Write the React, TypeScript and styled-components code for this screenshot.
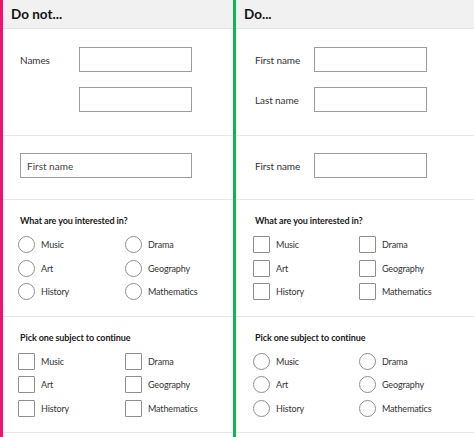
import React from "react";
import styled, { createGlobalStyle } from "styled-components";

const GlobalStyle = createGlobalStyle`
  html, body {
    margin: 0;
    padding: 0;
    background: #ffffff;
  }
  body {
    font-family: Lato, "Open Sans", "Liberation Sans", sans-serif;
    color: #333333;
  }
`;

const Page = styled.div`
  display: grid;
  grid-template-columns: 233px 1fr;
  width: 474px;
  height: 437px;
  overflow: hidden;
`;

const Column = styled.div<{ $accent: string; $inset: number }>`
  border-left: 3px solid ${(p) => p.$accent};
  display: flex;
  flex-direction: column;
  --inset: ${(p) => p.$inset}px;
`;

const Header = styled.div`
  height: 29px;
  box-sizing: border-box;
  background: #f1f1f1;
  border-bottom: 1px solid #e2e2e2;
  display: flex;
  align-items: center;
  padding-left: 8px;
  font-size: 13.5px;
  font-weight: 700;
  color: #111111;
`;

const Section = styled.div<{ $top: number; $bottom: number; $gap?: number }>`
  border-bottom: 1px solid #e6e6e6;
  padding: ${(p) => p.$top}px 0 ${(p) => p.$bottom}px var(--inset);
  display: flex;
  flex-direction: column;
  gap: ${(p) => p.$gap ?? 0}px;
`;

const Field = styled.div`
  display: flex;
  align-items: center;
`;

const Label = styled.label`
  width: 59px;
  flex: none;
  font-size: 10px;
  letter-spacing: -0.1px;
  color: #333333;
`;

const Input = styled.input<{ $wide?: boolean }>`
  box-sizing: border-box;
  width: ${(p) => (p.$wide ? "172px" : "113px")};
  height: 25px;
  border: 1px solid #9c9c9c;
  border-radius: 0;
  padding: 0 6px;
  font-family: inherit;
  font-size: 10px;
  color: #333333;
  background: #ffffff;
  &::placeholder {
    color: #444444;
  }
`;

const Heading = styled.div`
  font-size: 9px;
  font-weight: 700;
  letter-spacing: -0.1px;
  color: #1a1a1a;
  height: 14px;
  line-height: 14px;
  margin-bottom: 5px;
`;

const Options = styled.div<{ $second: number }>`
  display: grid;
  grid-template-columns: ${(p) => p.$second}px 1fr;
  grid-auto-rows: 23.5px;
  margin-left: -2px;
`;

const Option = styled.div`
  display: flex;
  align-items: center;
  gap: 6px;
  font-size: 9px;
  letter-spacing: -0.15px;
  color: #333333;
`;

const Control = styled.span<{ $round: boolean }>`
  width: 17px;
  height: 17px;
  box-sizing: border-box;
  border: 1px solid #8e8e8e;
  border-radius: ${(p) => (p.$round ? "50%" : "1px")};
  background: #ffffff;
  flex: none;
`;

const subjects = ["Music", "Drama", "Art", "Geography", "History", "Mathematics"];

type GroupProps = { title: string; round: boolean; second: number };

const Group = ({ title, round, second }: GroupProps) => (
  <Section $top={14} $bottom={12}>
    <Heading>{title}</Heading>
    <Options $second={second}>
      {subjects.map((s) => (
        <Option key={s}>
          <Control $round={round} />
          {s}
        </Option>
      ))}
    </Options>
  </Section>
);

const App = () => (
  <>
    <GlobalStyle />
    <Page>
      <Column $accent="#f5106c" $inset={17}>
        <Header>Do not...</Header>
        <Section $top={18} $bottom={23} $gap={15}>
          <Field>
            <Label>Names</Label>
            <Input />
          </Field>
          <Field>
            <Label />
            <Input />
          </Field>
        </Section>
        <Section $top={17} $bottom={21}>
          <Field>
            <Input $wide placeholder="First name" />
          </Field>
        </Section>
        <Group title="What are you interested in?" round second={107} />
        <Group title="Pick one subject to continue" round={false} second={107} />
      </Column>
      <Column $accent="#10b358" $inset={19}>
        <Header>Do...</Header>
        <Section $top={18} $bottom={23} $gap={15}>
          <Field>
            <Label>First name</Label>
            <Input />
          </Field>
          <Field>
            <Label>Last name</Label>
            <Input />
          </Field>
        </Section>
        <Section $top={17} $bottom={21}>
          <Field>
            <Label>First name</Label>
            <Input />
          </Field>
        </Section>
        <Group title="What are you interested in?" round={false} second={106} />
        <Group title="Pick one subject to continue" round second={106} />
      </Column>
    </Page>
  </>
);

export default App;
